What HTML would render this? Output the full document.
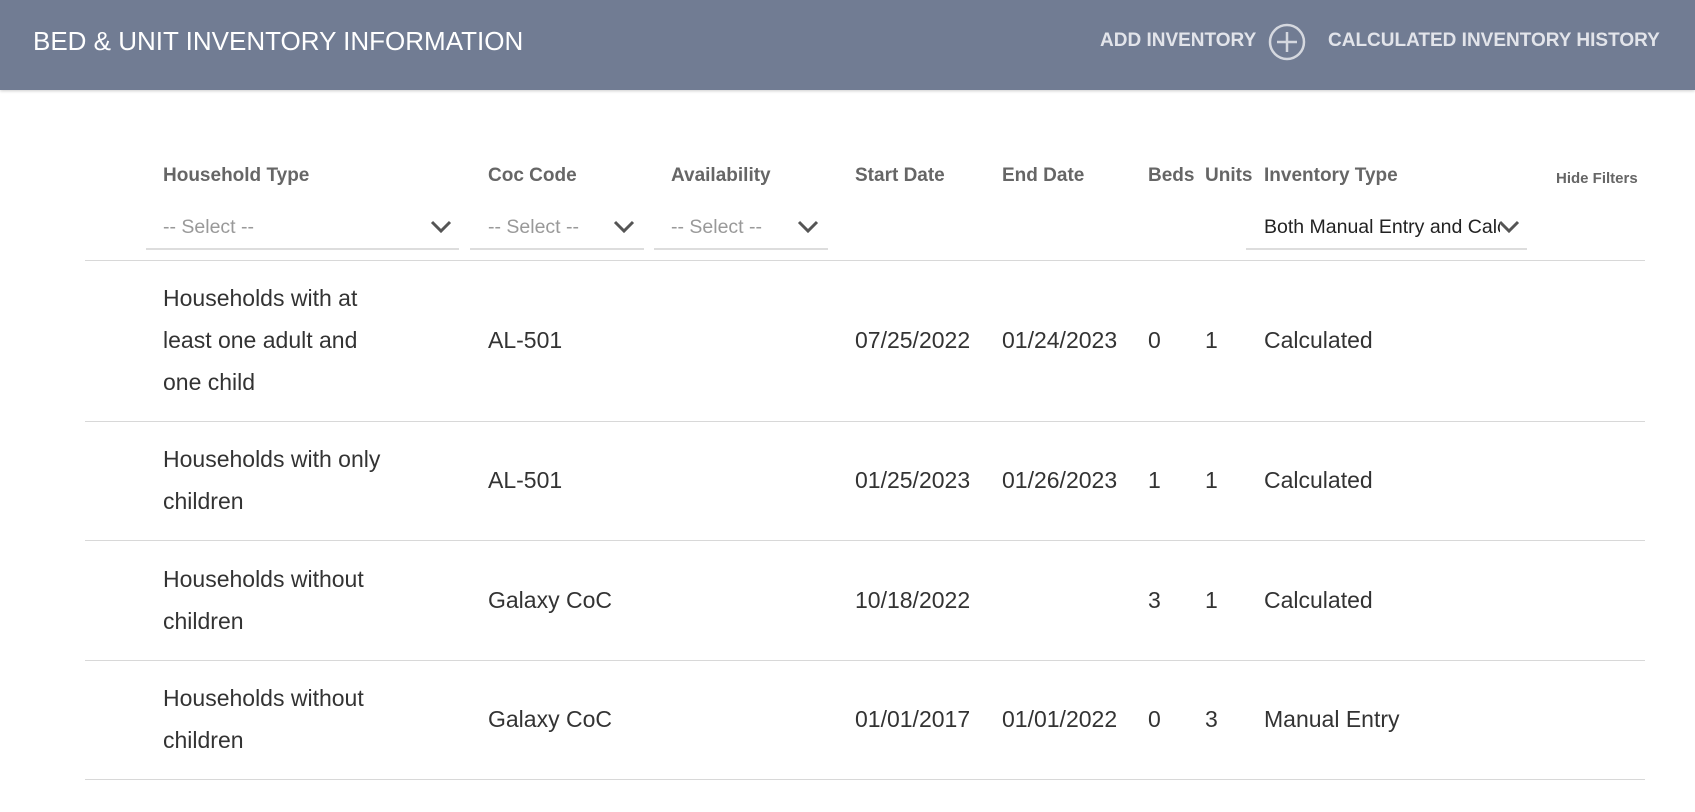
<!DOCTYPE html>
<html><head><meta charset="utf-8"><style>
*{margin:0;padding:0;box-sizing:border-box}
body{width:1695px;height:812px;background:#fff;font-family:"Liberation Sans",Arial,sans-serif;position:relative;overflow:hidden;color:#333}
.hdr{position:absolute;left:0;top:0;width:1695px;height:90px;background:#717c93;box-shadow:0 1px 3px rgba(0,0,0,.2)}
.t{position:absolute;white-space:nowrap}
.title{left:33px;top:26px;font-size:26px;color:#fff}
.lk{top:30px;font-size:19px;font-weight:bold;color:#e2e4ea}
.lab{font-size:19px;font-weight:bold;color:#666;top:165px}
.sel{font-size:19.5px;color:#999;top:216px}
.ul{position:absolute;height:2px;background:#ddd;top:248px}
.chev{position:absolute;top:220px;width:22px;height:14px}
.hl{position:absolute;left:85px;width:1560px;height:1px;background:#d8d8d8}
.c{font-size:23px;color:#333;line-height:42px}
</style></head><body>
<div class="hdr"></div>
<div class="t title">BED &amp; UNIT INVENTORY INFORMATION</div>
<div class="t lk" style="left:1100px">ADD INVENTORY</div>
<svg style="position:absolute;left:1267px;top:22px" width="40" height="40" viewBox="0 0 40 40"><circle cx="20" cy="20" r="17" fill="none" stroke="#d5d8df" stroke-width="2.5"/><path d="M20 10v20M10 20h20" stroke="#d5d8df" stroke-width="2.5"/></svg>
<div class="t lk" style="left:1328px">CALCULATED INVENTORY HISTORY</div>

<div class="t lab" style="left:163px">Household Type</div>
<div class="t lab" style="left:488px">Coc Code</div>
<div class="t lab" style="left:671px">Availability</div>
<div class="t lab" style="left:855px">Start Date</div>
<div class="t lab" style="left:1002px">End Date</div>
<div class="t lab" style="left:1148px">Beds</div>
<div class="t lab" style="left:1205px">Units</div>
<div class="t lab" style="left:1264px">Inventory Type</div>
<div class="t lab" style="left:1556px;font-size:15px;top:170px">Hide Filters</div>

<div class="t sel" style="left:163px">-- Select --</div>
<div class="t sel" style="left:488px">-- Select --</div>
<div class="t sel" style="left:671px">-- Select --</div>
<div class="t sel" style="left:1264px;color:#222;width:236px;overflow:hidden">Both Manual Entry and Calculated</div>
<svg class="chev" style="left:430px" viewBox="0 0 22 14"><path d="M2 2l9 9 9-9" fill="none" stroke="#555" stroke-width="3"/></svg>
<svg class="chev" style="left:613px" viewBox="0 0 22 14"><path d="M2 2l9 9 9-9" fill="none" stroke="#555" stroke-width="3"/></svg>
<svg class="chev" style="left:797px" viewBox="0 0 22 14"><path d="M2 2l9 9 9-9" fill="none" stroke="#555" stroke-width="3"/></svg>
<svg class="chev" style="left:1498px" viewBox="0 0 22 14"><path d="M2 2l9 9 9-9" fill="none" stroke="#555" stroke-width="3"/></svg>
<div class="ul" style="left:146px;width:313px"></div>
<div class="ul" style="left:470px;width:174px"></div>
<div class="ul" style="left:654px;width:174px"></div>
<div class="ul" style="left:1246px;width:281px"></div>

<div class="hl" style="top:260px"></div>
<div class="hl" style="top:421px"></div>
<div class="hl" style="top:540px"></div>
<div class="hl" style="top:660px"></div>
<div class="hl" style="top:779px"></div>

<div class="t c" style="left:163px;top:277px">Households with at<br>least one adult and<br>one child</div>
<div class="t c" style="left:488px;top:319px">AL-501</div>
<div class="t c" style="left:855px;top:319px">07/25/2022</div>
<div class="t c" style="left:1002px;top:319px">01/24/2023</div>
<div class="t c" style="left:1148px;top:319px">0</div>
<div class="t c" style="left:1205px;top:319px">1</div>
<div class="t c" style="left:1264px;top:319px">Calculated</div>

<div class="t c" style="left:163px;top:438px">Households with only<br>children</div>
<div class="t c" style="left:488px;top:459px">AL-501</div>
<div class="t c" style="left:855px;top:459px">01/25/2023</div>
<div class="t c" style="left:1002px;top:459px">01/26/2023</div>
<div class="t c" style="left:1148px;top:459px">1</div>
<div class="t c" style="left:1205px;top:459px">1</div>
<div class="t c" style="left:1264px;top:459px">Calculated</div>

<div class="t c" style="left:163px;top:558px">Households without<br>children</div>
<div class="t c" style="left:488px;top:579px">Galaxy CoC</div>
<div class="t c" style="left:855px;top:579px">10/18/2022</div>
<div class="t c" style="left:1148px;top:579px">3</div>
<div class="t c" style="left:1205px;top:579px">1</div>
<div class="t c" style="left:1264px;top:579px">Calculated</div>

<div class="t c" style="left:163px;top:677px">Households without<br>children</div>
<div class="t c" style="left:488px;top:698px">Galaxy CoC</div>
<div class="t c" style="left:855px;top:698px">01/01/2017</div>
<div class="t c" style="left:1002px;top:698px">01/01/2022</div>
<div class="t c" style="left:1148px;top:698px">0</div>
<div class="t c" style="left:1205px;top:698px">3</div>
<div class="t c" style="left:1264px;top:698px">Manual Entry</div>
</body></html>
